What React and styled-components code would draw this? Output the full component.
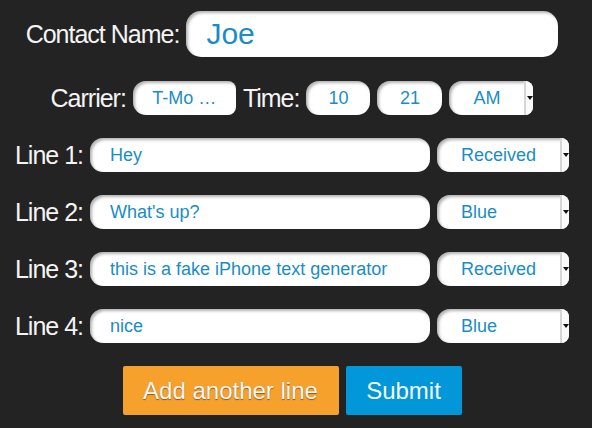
import React from "react";
import styled, { createGlobalStyle } from "styled-components";

const Global = createGlobalStyle`
  html, body { margin: 0; padding: 0; background: #232323; }
  body { font-family: "Liberation Sans", Arial, sans-serif; }
`;

const Page = styled.div`
  width: 584px;
  padding-top: 11px;
  display: flex;
  flex-direction: column;
  align-items: center;
  gap: 23px;
`;

const Row = styled.div`
  display: flex;
  align-items: center;
  gap: 7px;
  margin-bottom: ${(p) => p.$mb || 0}px;
`;

const Label = styled.span`
  font-family: "Liberation Sans", Arial, sans-serif;
  font-size: 25px;
  letter-spacing: -1px;
  color: #f4f4f4;
  white-space: nowrap;
`;

const TextField = styled.div`
  box-sizing: border-box;
  width: ${(p) => p.$w}px;
  height: ${(p) => p.$h || 34}px;
  background: #fff;
  border-radius: ${(p) => p.$r || 13}px;
  box-shadow: inset 2px 2px 3px rgba(0, 0, 0, 0.3);
  display: flex;
  align-items: center;
  justify-content: ${(p) => (p.$center ? "center" : "flex-start")};
  padding-left: ${(p) => (p.$center ? 0 : 20)}px;
  font-size: ${(p) => p.$fs || 18}px;
  color: #1a8dc6;
  white-space: nowrap;
  overflow: hidden;
`;

const SelectBox = styled.div`
  box-sizing: border-box;
  width: ${(p) => p.$w}px;
  height: 34px;
  background: #fff;
  border-radius: 13px 8px 8px 13px;
  box-shadow: inset 2px 2px 3px rgba(0, 0, 0, 0.3);
  display: flex;
  align-items: stretch;
  overflow: hidden;
`;

const SelectText = styled.div`
  flex: 1;
  display: flex;
  align-items: center;
  justify-content: ${(p) => (p.$left ? "flex-start" : "center")};
  padding-left: ${(p) => (p.$left ? 24 : 0)}px;
  font-size: 18px;
  color: #1a8dc6;
  white-space: nowrap;
`;

const Arrow = styled.div`
  width: 7px;
  border-left: 2px solid #d6d6d6;
  background: #fafafa;
  display: flex;
  align-items: center;
  justify-content: center;
  &::after {
    content: "";
    width: 0;
    height: 0;
    border-left: 3px solid transparent;
    border-right: 3px solid transparent;
    border-top: 4px solid #111;
  }
`;

const Button = styled.button`
  height: 49px;
  width: ${(p) => p.$w}px;
  border: none;
  border-radius: 2px;
  background: ${(p) => p.$bg};
  color: #f6f6f6;
  font-family: "Liberation Sans", Arial, sans-serif;
  font-size: 24px;
  padding: 0;
  text-shadow: ${(p) => (p.$shadow ? "0 1px 1px rgba(0,0,0,0.45)" : "none")};
`;

const Select = ({ w, children, left }) => (
  <SelectBox $w={w}>
    <SelectText $left={left}>{children}</SelectText>
    <Arrow />
  </SelectBox>
);

const lines = [
  ["Line 1:", "Hey", "Received"],
  ["Line 2:", "What's up?", "Blue"],
  ["Line 3:", "this is a fake iPhone text generator", "Received"],
  ["Line 4:", "nice", "Blue"],
];

export default function App() {
  return (
    <>
      <Global />
      <Page>
        <Row $mb={1}>
          <Label>Contact Name:</Label>
          <TextField $w={372} $h={46} $r={15} $fs={30}>Joe</TextField>
        </Row>
        <Row>
          <Label>Carrier:</Label>
          <SelectBox $w={103}>
            <SelectText>T-Mo …</SelectText>
          </SelectBox>
          <Label>Time:</Label>
          <TextField $w={64} $center>10</TextField>
          <TextField $w={65} $center>21</TextField>
          <Select w={84}>AM</Select>
        </Row>
        {lines.map(([l, t, s]) => (
          <Row key={l}>
            <Label>{l}</Label>
            <TextField $w={340}>{t}</TextField>
            <Select w={132} left>{s}</Select>
          </Row>
        ))}
        <Row>
          <Button $w={216} $bg="#f7a12d" $shadow>Add another line</Button>
          <Button $w={116} $bg="#0197d9">Submit</Button>
        </Row>
      </Page>
    </>
  );
}
